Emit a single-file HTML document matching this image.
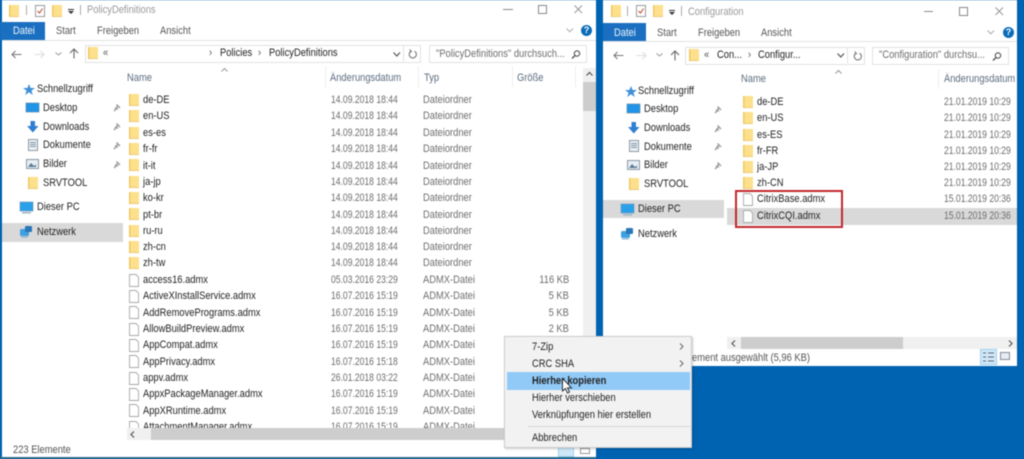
<!DOCTYPE html>
<html lang="de"><head><meta charset="utf-8"><title>PolicyDefinitions</title>
<style>
html,body{margin:0;padding:0;width:1024px;height:459px;overflow:hidden;background:#0063b1}
#r{position:relative;width:1024px;height:459px;overflow:hidden;filter:blur(.4px);font:11px "Liberation Sans",sans-serif;color:#222}
.b{position:absolute}
.t{position:absolute;line-height:14px;white-space:nowrap;transform:scaleX(.85);transform-origin:0 50%}
.g{color:#6d6d6d}
.g[style*="left:204px"],.g[style*="left:944px"]{transform:scaleX(.78)}
.t[style*="right:"]{transform-origin:100% 50%}
.h{color:#5b6b7d}
svg.i{position:absolute;overflow:visible}
.m{color:#555}
</style></head><body><div id="r">
<svg width="0" height="0" style="position:absolute"><defs>
<g id="fo"><rect x="0" y="0" width="10" height="12" fill="#fde08c"/><rect x="0" y="0" width="1.5" height="12" fill="#f1c863"/><rect x="0" y="11.3" width="10" height=".7" fill="#e8c068"/></g>
<g id="fi"><path d="M.5.5H7L9.5 3V12.5H.5Z" fill="#fff" stroke="#a8a8a8" stroke-width=".9"/></g>
<g id="pin"><path d="M3 6L6.5 2.5M4.5 1.5L8 5M4 4.5L5.8 6.5M2 8L4 6" stroke="#9a9a9a" stroke-width="1.4" fill="none"/></g>
<g id="star"><path d="M6 0L7.6 4H12L8.5 6.6L9.8 11L6 8.3L2.2 11L3.5 6.6L0 4H4.4Z" fill="#3f8fd8"/></g>
<g id="desk"><rect x="0" y="0" width="13" height="9" fill="#1f94e8" stroke="#6b8aa6" stroke-width=".7"/></g>
<g id="dl"><path d="M3.5 0H8V5H11.5L5.8 11.5L0 5H3.5Z" fill="#2f7fd0"/></g>
<g id="doc"><rect x=".5" y=".5" width="9" height="11" fill="#eef1f3" stroke="#8b9aa6"/><path d="M2 3.5H8M2 5.5H8M2 7.5H8" stroke="#7d95a8"/></g>
<g id="pic"><rect x=".5" y=".5" width="12" height="9" fill="#e6edf3" stroke="#8b9aa6"/><path d="M2 8L5 4L8 7L10 5.5V8Z" fill="#5b7a95"/></g>
<g id="pc"><rect x="0" y="0" width="13" height="9" fill="#28a0ea" stroke="#7a99b5" stroke-width=".7"/><rect x="2" y="10" width="9" height="1.5" fill="#9db4c6"/></g>
<g id="net"><rect x="0" y="3" width="9" height="7" rx="1.5" fill="#3f9fe0"/><rect x="5" y="0" width="7" height="6" rx="1" fill="#2877b8"/><path d="M1 11H8" stroke="#7fa9c8"/></g>
<g id="chk"><rect x=".5" y=".5" width="9" height="11" fill="#fff" stroke="#9a9a9a"/><path d="M2.5 6L4.5 8L7.5 3.5" stroke="#c0503c" fill="none" stroke-width="1.1"/></g>
<g id="mag"><circle cx="6" cy="3.5" r="2.7" fill="none" stroke="#555" stroke-width="1.1"/><path d="M4 5.5L1 8.5" stroke="#555" stroke-width="1.4"/></g>
<g id="rf"><path d="M6.5 2.2A3.6 3.6 0 1 1 2.5 2.6" fill="none" stroke="#777" stroke-width="1.1"/><path d="M1.5 0.5L3.5 2.5L1.2 3.8" fill="none" stroke="#777"/></g>
</defs></svg>

<!-- LEFT WINDOW -->
<div class="b" style="left:2px;top:0;width:594px;height:457px;background:#fff"></div>
<div class="b" style="left:0;top:457px;width:596px;height:2px;background:#2f6f8f"></div>
<svg class="i" style="left:9px;top:5px" width="10" height="12"><use href="#fo"/></svg>
<div class="b" style="left:26px;top:5px;width:1px;height:10px;background:#aaa"></div>
<svg class="i" style="left:35px;top:5px" width="10" height="12"><use href="#chk"/></svg>
<svg class="i" style="left:52px;top:5px" width="10" height="12"><use href="#fo"/></svg>
<div class="b" style="left:68px;top:9px;width:6px;height:1px;background:#333"></div>
<div class="b" style="left:68px;top:11px;width:0;height:0;border:3px solid transparent;border-top:3px solid #333"></div>
<div class="b" style="left:80px;top:5px;width:1px;height:10px;background:#aaa"></div>
<div class="t" style="left:87px;top:3px;color:#999">PolicyDefinitions</div>
<div class="b" style="left:503px;top:9px;width:10px;height:1px;background:#888"></div>
<div class="b" style="left:538px;top:5px;width:7px;height:7px;border:1px solid #888"></div>
<svg class="i" style="left:574px;top:5px" width="9" height="9"><path d="M.5.5L8 8M8 .5L.5 8" stroke="#999" fill="none"/></svg>
<svg class="i" style="left:566px;top:28px" width="8" height="5"><path d="M.5.5L3.8 3.8L7 .5" stroke="#aaa" fill="none"/></svg>
<div class="b" style="left:581px;top:25px;width:11px;height:11px;border-radius:50%;background:#0a6cb8;color:#fff;font:bold 9px/11px 'Liberation Sans',sans-serif;text-align:center">?</div>
<div class="b" style="left:0;top:22px;width:45px;height:18px;background:#1a6fc0"></div>
<div class="t" style="left:13px;top:24px;color:#f2f6fa">Datei</div>
<div class="t m" style="left:56px;top:24px">Start</div>
<div class="t m" style="left:97px;top:24px">Freigeben</div>
<div class="t m" style="left:160px;top:24px">Ansicht</div>
<div class="b" style="left:2px;top:40px;width:594px;height:1px;background:#e2e2e2"></div>
<svg class="i" style="left:11px;top:50px" width="11" height="9"><path d="M10.5 4.5H1M4.5 1L1 4.5L4.5 8" stroke="#777" fill="none" stroke-width="1.1"/></svg>
<svg class="i" style="left:34px;top:50px" width="11" height="9"><path d="M.5 4.5H10M6.5 1L10 4.5L6.5 8" stroke="#ddd" fill="none" stroke-width="1.1"/></svg>
<svg class="i" style="left:55px;top:52px" width="7" height="4"><path d="M.5.5L3.5 3L6.5.5" stroke="#999" fill="none"/></svg>
<svg class="i" style="left:69px;top:48px" width="10" height="11"><path d="M5 10.5V1M1 5L5 1L9 5" stroke="#666" fill="none" stroke-width="1.1"/></svg>
<div class="b" style="left:85px;top:45px;width:334px;height:16px;border:1px solid #e2e2e2"></div>
<svg class="i" style="left:88px;top:47px" width="10" height="12"><use href="#fo"/></svg>
<div class="t m" style="left:103px;top:46px">«</div>
<div class="t m" style="left:209px;top:46px">›</div>
<div class="t" style="left:220px;top:46px">Policies</div>
<div class="t m" style="left:258px;top:46px">›</div>
<div class="t" style="left:269px;top:46px">PolicyDefinitions</div>
<svg class="i" style="left:393px;top:52px" width="8" height="5"><path d="M.5.5L3.8 4L7 .5" stroke="#555" fill="none" stroke-width="1.2"/></svg>
<div class="b" style="left:403px;top:46px;width:1px;height:16px;background:#e2e2e2"></div>
<svg class="i" style="left:408px;top:49px" width="8" height="9"><use href="#rf"/></svg>
<div class="b" style="left:429px;top:45px;width:156px;height:16px;border:1px solid #e2e2e2"></div>
<div class="t g" style="left:436px;top:47px">"PolicyDefinitions" durchsuch...</div>
<svg class="i" style="left:571px;top:50px" width="9" height="9"><use href="#mag"/></svg>

<svg class="i" style="left:221px;top:68px" width="7" height="4"><path d="M.5 3.5L3.5.5L6.5 3.5" stroke="#999" fill="none"/></svg>
<div class="t h" style="left:127px;top:71px">Name</div>
<div class="t h" style="left:330px;top:71px">Änderungsdatum</div>
<div class="t h" style="left:424px;top:71px">Typ</div>
<div class="t h" style="left:517px;top:71px">Größe</div>
<div class="b" style="left:325px;top:66px;width:1px;height:21px;background:#eee"></div>
<div class="b" style="left:418px;top:66px;width:1px;height:21px;background:#eee"></div>
<div class="b" style="left:512px;top:66px;width:1px;height:21px;background:#eee"></div>
<div class="b" style="left:575px;top:66px;width:1px;height:21px;background:#eee"></div>

<svg class="i" style="left:23px;top:84px" width="12" height="11"><use href="#star"/></svg>
<div class="t" style="left:37px;top:82px">Schnellzugriff</div>
<svg class="i" style="left:26px;top:103px" width="13" height="10"><use href="#desk"/></svg>
<div class="t" style="left:43px;top:101px">Desktop</div>
<svg class="i" style="left:112px;top:103px" width="9" height="9"><use href="#pin"/></svg>
<svg class="i" style="left:27px;top:121px" width="12" height="12"><use href="#dl"/></svg>
<div class="t" style="left:43px;top:120px">Downloads</div>
<svg class="i" style="left:112px;top:122px" width="9" height="9"><use href="#pin"/></svg>
<svg class="i" style="left:28px;top:139px" width="10" height="12"><use href="#doc"/></svg>
<div class="t" style="left:43px;top:138px">Dokumente</div>
<svg class="i" style="left:112px;top:141px" width="9" height="9"><use href="#pin"/></svg>
<svg class="i" style="left:26px;top:159px" width="13" height="10"><use href="#pic"/></svg>
<div class="t" style="left:43px;top:157px">Bilder</div>
<svg class="i" style="left:112px;top:160px" width="9" height="9"><use href="#pin"/></svg>
<svg class="i" style="left:28px;top:177px" width="10" height="12"><use href="#fo"/></svg>
<div class="t" style="left:43px;top:176px">SRVTOOL</div>
<svg class="i" style="left:20px;top:202px" width="13" height="12"><use href="#pc"/></svg>
<div class="t" style="left:37px;top:200px">Dieser PC</div>
<div class="b" style="left:2px;top:223px;width:121px;height:19px;background:#d9d9d9"></div>
<svg class="i" style="left:20px;top:226px" width="13" height="12"><use href="#net"/></svg>
<div class="t" style="left:37px;top:225px">Netzwerk</div>

<!-- left list -->
<div class="b" id="ll" style="left:127px;top:88px;width:456px;height:340px;overflow:hidden">
<svg class="i" style="left:2px;top:6px" width="10" height="12"><use href="#fo"/></svg><div class="t" style="left:16px;top:5px">de-DE</div><div class="t g" style="left:204px;top:5px">14.09.2018 18:44</div><div class="t g" style="left:296px;top:5px">Dateiordner</div>
<svg class="i" style="left:2px;top:22px" width="10" height="12"><use href="#fo"/></svg><div class="t" style="left:16px;top:21px">en-US</div><div class="t g" style="left:204px;top:21px">14.09.2018 18:44</div><div class="t g" style="left:296px;top:21px">Dateiordner</div>
<svg class="i" style="left:2px;top:39px" width="10" height="12"><use href="#fo"/></svg><div class="t" style="left:16px;top:38px">es-es</div><div class="t g" style="left:204px;top:38px">14.09.2018 18:44</div><div class="t g" style="left:296px;top:38px">Dateiordner</div>
<svg class="i" style="left:2px;top:55px" width="10" height="12"><use href="#fo"/></svg><div class="t" style="left:16px;top:54px">fr-fr</div><div class="t g" style="left:204px;top:54px">14.09.2018 18:44</div><div class="t g" style="left:296px;top:54px">Dateiordner</div>
<svg class="i" style="left:2px;top:71px" width="10" height="12"><use href="#fo"/></svg><div class="t" style="left:16px;top:71px">it-it</div><div class="t g" style="left:204px;top:71px">14.09.2018 18:44</div><div class="t g" style="left:296px;top:71px">Dateiordner</div>
<svg class="i" style="left:2px;top:88px" width="10" height="12"><use href="#fo"/></svg><div class="t" style="left:16px;top:87px">ja-jp</div><div class="t g" style="left:204px;top:87px">14.09.2018 18:44</div><div class="t g" style="left:296px;top:87px">Dateiordner</div>
<svg class="i" style="left:2px;top:104px" width="10" height="12"><use href="#fo"/></svg><div class="t" style="left:16px;top:103px">ko-kr</div><div class="t g" style="left:204px;top:103px">14.09.2018 18:44</div><div class="t g" style="left:296px;top:103px">Dateiordner</div>
<svg class="i" style="left:2px;top:120px" width="10" height="12"><use href="#fo"/></svg><div class="t" style="left:16px;top:120px">pt-br</div><div class="t g" style="left:204px;top:120px">14.09.2018 18:44</div><div class="t g" style="left:296px;top:120px">Dateiordner</div>
<svg class="i" style="left:2px;top:137px" width="10" height="12"><use href="#fo"/></svg><div class="t" style="left:16px;top:136px">ru-ru</div><div class="t g" style="left:204px;top:136px">14.09.2018 18:44</div><div class="t g" style="left:296px;top:136px">Dateiordner</div>
<svg class="i" style="left:2px;top:153px" width="10" height="12"><use href="#fo"/></svg><div class="t" style="left:16px;top:152px">zh-cn</div><div class="t g" style="left:204px;top:152px">14.09.2018 18:44</div><div class="t g" style="left:296px;top:152px">Dateiordner</div>
<svg class="i" style="left:2px;top:169px" width="10" height="12"><use href="#fo"/></svg><div class="t" style="left:16px;top:168px">zh-tw</div><div class="t g" style="left:204px;top:168px">14.09.2018 18:44</div><div class="t g" style="left:296px;top:168px">Dateiordner</div>
<svg class="i" style="left:2px;top:186px" width="10" height="13"><use href="#fi"/></svg><div class="t" style="left:16px;top:185px">access16.admx</div><div class="t g" style="left:204px;top:185px">05.03.2016 23:29</div><div class="t g" style="left:296px;top:185px">ADMX-Datei</div><div class="t g" style="right:14px;top:185px">116 KB</div>
<svg class="i" style="left:2px;top:202px" width="10" height="13"><use href="#fi"/></svg><div class="t" style="left:16px;top:201px">ActiveXInstallService.admx</div><div class="t g" style="left:204px;top:201px">16.07.2016 15:19</div><div class="t g" style="left:296px;top:201px">ADMX-Datei</div><div class="t g" style="right:14px;top:201px">5 KB</div>
<svg class="i" style="left:2px;top:218px" width="10" height="13"><use href="#fi"/></svg><div class="t" style="left:16px;top:218px">AddRemovePrograms.admx</div><div class="t g" style="left:204px;top:218px">16.07.2016 15:19</div><div class="t g" style="left:296px;top:218px">ADMX-Datei</div><div class="t g" style="right:14px;top:218px">5 KB</div>
<svg class="i" style="left:2px;top:235px" width="10" height="13"><use href="#fi"/></svg><div class="t" style="left:16px;top:234px">AllowBuildPreview.admx</div><div class="t g" style="left:204px;top:234px">16.07.2016 15:19</div><div class="t g" style="left:296px;top:234px">ADMX-Datei</div><div class="t g" style="right:14px;top:234px">2 KB</div>
<svg class="i" style="left:2px;top:251px" width="10" height="13"><use href="#fi"/></svg><div class="t" style="left:16px;top:250px">AppCompat.admx</div><div class="t g" style="left:204px;top:250px">16.07.2016 15:19</div><div class="t g" style="left:296px;top:250px">ADMX-Datei</div>
<svg class="i" style="left:2px;top:267px" width="10" height="13"><use href="#fi"/></svg><div class="t" style="left:16px;top:267px">AppPrivacy.admx</div><div class="t g" style="left:204px;top:267px">16.07.2016 15:18</div><div class="t g" style="left:296px;top:267px">ADMX-Datei</div>
<svg class="i" style="left:2px;top:284px" width="10" height="13"><use href="#fi"/></svg><div class="t" style="left:16px;top:283px">appv.admx</div><div class="t g" style="left:204px;top:283px">26.01.2018 03:22</div><div class="t g" style="left:296px;top:283px">ADMX-Datei</div>
<svg class="i" style="left:2px;top:300px" width="10" height="13"><use href="#fi"/></svg><div class="t" style="left:16px;top:299px">AppxPackageManager.admx</div><div class="t g" style="left:204px;top:299px">16.07.2016 15:19</div><div class="t g" style="left:296px;top:299px">ADMX-Datei</div>
<svg class="i" style="left:2px;top:316px" width="10" height="13"><use href="#fi"/></svg><div class="t" style="left:16px;top:316px">AppXRuntime.admx</div><div class="t g" style="left:204px;top:316px">16.07.2016 15:19</div><div class="t g" style="left:296px;top:316px">ADMX-Datei</div>
<svg class="i" style="left:2px;top:333px" width="10" height="13"><use href="#fi"/></svg><div class="t" style="left:16px;top:332px">AttachmentManager.admx</div><div class="t g" style="left:204px;top:332px">16.07.2016 15:19</div><div class="t g" style="left:296px;top:332px">ADMX-Datei</div>
</div>
<!-- left scrollbars -->
<div class="b" style="left:583px;top:68px;width:13px;height:372px;background:#f0f0f0"></div>
<div class="b" style="left:583px;top:82px;width:13px;height:29px;background:#cdcdcd"></div>
<svg class="i" style="left:586px;top:72px" width="7" height="4"><path d="M.5 3.5L3.5.5L6.5 3.5" stroke="#555" fill="none" stroke-width="1.2"/></svg>
<div class="b" style="left:127px;top:428px;width:456px;height:12px;background:#f0f0f0"></div>
<div class="b" style="left:151px;top:428px;width:354px;height:12px;background:#cdcdcd"></div>
<svg class="i" style="left:130px;top:431px" width="5" height="7"><path d="M4 .5L1 3.5L4 6.5" stroke="#555" fill="none" stroke-width="1.2"/></svg>
<div class="t m" style="left:13px;top:443px">223 Elemente</div>
<div class="b" style="left:558px;top:447px;width:16px;height:10px;background:#cfe8f8;border:1px solid #9fd3f2;box-sizing:border-box"></div>
<div class="b" style="left:580px;top:448px;width:10px;height:6px;border:1px solid #999;box-sizing:border-box"></div>

<!-- RIGHT WINDOW -->
<div class="b" style="left:603px;top:0;width:414px;height:366px;background:#fff"></div>
<svg class="i" style="left:611px;top:5px" width="10" height="12"><use href="#fo"/></svg>
<div class="b" style="left:627px;top:6px;width:1px;height:10px;background:#aaa"></div>
<svg class="i" style="left:636px;top:5px" width="10" height="12"><use href="#chk"/></svg>
<svg class="i" style="left:653px;top:5px" width="10" height="12"><use href="#fo"/></svg>
<div class="b" style="left:669px;top:10px;width:6px;height:1px;background:#333"></div>
<div class="b" style="left:669px;top:12px;width:0;height:0;border:3px solid transparent;border-top:3px solid #333"></div>
<div class="b" style="left:681px;top:6px;width:1px;height:10px;background:#aaa"></div>
<div class="t" style="left:688px;top:5px;color:#999">Configuration</div>
<div class="b" style="left:924px;top:11px;width:9px;height:1px;background:#888"></div>
<div class="b" style="left:959px;top:7px;width:7px;height:7px;border:1px solid #888"></div>
<svg class="i" style="left:995px;top:7px" width="9" height="9"><path d="M.5.5L8 8M8 .5L.5 8" stroke="#999" fill="none"/></svg>
<svg class="i" style="left:987px;top:30px" width="8" height="5"><path d="M.5.5L3.8 3.8L7 .5" stroke="#aaa" fill="none"/></svg>
<div class="b" style="left:1003px;top:27px;width:11px;height:11px;border-radius:50%;background:#0a6cb8;color:#fff;font:bold 9px/11px 'Liberation Sans',sans-serif;text-align:center">?</div>
<div class="b" style="left:603px;top:23px;width:43px;height:18px;background:#1a6fc0"></div>
<div class="t" style="left:614px;top:26px;color:#f2f6fa">Datei</div>
<div class="t m" style="left:657px;top:26px">Start</div>
<div class="t m" style="left:698px;top:26px">Freigeben</div>
<div class="t m" style="left:761px;top:26px">Ansicht</div>
<div class="b" style="left:603px;top:41px;width:414px;height:1px;background:#e2e2e2"></div>
<svg class="i" style="left:613px;top:51px" width="11" height="9"><path d="M10.5 4.5H1M4.5 1L1 4.5L4.5 8" stroke="#777" fill="none" stroke-width="1.1"/></svg>
<svg class="i" style="left:636px;top:51px" width="11" height="9"><path d="M.5 4.5H10M6.5 1L10 4.5L6.5 8" stroke="#ddd" fill="none" stroke-width="1.1"/></svg>
<svg class="i" style="left:656px;top:53px" width="7" height="4"><path d="M.5.5L3.5 3L6.5.5" stroke="#999" fill="none"/></svg>
<svg class="i" style="left:670px;top:50px" width="10" height="11"><path d="M5 10.5V1M1 5L5 1L9 5" stroke="#666" fill="none" stroke-width="1.1"/></svg>
<div class="b" style="left:685px;top:47px;width:178px;height:16px;border:1px solid #e2e2e2"></div>
<svg class="i" style="left:689px;top:49px" width="10" height="12"><use href="#fo"/></svg>
<div class="t m" style="left:704px;top:48px">«</div>
<div class="t" style="left:717px;top:48px">Con...</div>
<div class="t m" style="left:748px;top:48px">›</div>
<div class="t" style="left:758px;top:48px">Configur...</div>
<svg class="i" style="left:837px;top:53px" width="8" height="5"><path d="M.5.5L3.8 4L7 .5" stroke="#555" fill="none" stroke-width="1.2"/></svg>
<div class="b" style="left:847px;top:48px;width:1px;height:15px;background:#e2e2e2"></div>
<svg class="i" style="left:853px;top:51px" width="8" height="9"><use href="#rf"/></svg>
<div class="b" style="left:872px;top:47px;width:135px;height:16px;border:1px solid #e2e2e2"></div>
<div class="t g" style="left:879px;top:48px">"Configuration" durchsu...</div>
<svg class="i" style="left:992px;top:52px" width="9" height="9"><use href="#mag"/></svg>

<svg class="i" style="left:835px;top:70px" width="7" height="4"><path d="M.5 3.5L3.5.5L6.5 3.5" stroke="#999" fill="none"/></svg>
<div class="t h" style="left:741px;top:72px">Name</div>
<div class="t h" style="left:944px;top:72px">Änderungsdatum</div>
<div class="b" style="left:938px;top:69px;width:1px;height:20px;background:#eee"></div>

<svg class="i" style="left:625px;top:86px" width="12" height="11"><use href="#star"/></svg>
<div class="t" style="left:638px;top:84px">Schnellzugriff</div>
<svg class="i" style="left:627px;top:104px" width="13" height="10"><use href="#desk"/></svg>
<div class="t" style="left:644px;top:102px">Desktop</div>
<svg class="i" style="left:713px;top:105px" width="9" height="9"><use href="#pin"/></svg>
<svg class="i" style="left:628px;top:122px" width="12" height="12"><use href="#dl"/></svg>
<div class="t" style="left:644px;top:121px">Downloads</div>
<svg class="i" style="left:713px;top:124px" width="9" height="9"><use href="#pin"/></svg>
<svg class="i" style="left:629px;top:140px" width="10" height="12"><use href="#doc"/></svg>
<div class="t" style="left:644px;top:140px">Dokumente</div>
<svg class="i" style="left:713px;top:142px" width="9" height="9"><use href="#pin"/></svg>
<svg class="i" style="left:627px;top:160px" width="13" height="10"><use href="#pic"/></svg>
<div class="t" style="left:644px;top:158px">Bilder</div>
<svg class="i" style="left:713px;top:161px" width="9" height="9"><use href="#pin"/></svg>
<svg class="i" style="left:629px;top:178px" width="10" height="12"><use href="#fo"/></svg>
<div class="t" style="left:644px;top:177px">SRVTOOL</div>
<div class="b" style="left:603px;top:200px;width:121px;height:18px;background:#d9d9d9"></div>
<svg class="i" style="left:621px;top:204px" width="13" height="12"><use href="#pc"/></svg>
<div class="t" style="left:638px;top:202px">Dieser PC</div>
<svg class="i" style="left:621px;top:228px" width="13" height="12"><use href="#net"/></svg>
<div class="t" style="left:638px;top:227px">Netzwerk</div>

<svg class="i" style="left:743px;top:96px" width="10" height="12"><use href="#fo"/></svg><div class="t" style="left:757px;top:95px">de-DE</div><div class="t g" style="left:944px;top:95px">21.01.2019 10:29</div>
<svg class="i" style="left:743px;top:112px" width="10" height="12"><use href="#fo"/></svg><div class="t" style="left:757px;top:111px">en-US</div><div class="t g" style="left:944px;top:111px">21.01.2019 10:29</div>
<svg class="i" style="left:743px;top:129px" width="10" height="12"><use href="#fo"/></svg><div class="t" style="left:757px;top:128px">es-ES</div><div class="t g" style="left:944px;top:128px">21.01.2019 10:29</div>
<svg class="i" style="left:743px;top:145px" width="10" height="12"><use href="#fo"/></svg><div class="t" style="left:757px;top:144px">fr-FR</div><div class="t g" style="left:944px;top:144px">21.01.2019 10:29</div>
<svg class="i" style="left:743px;top:161px" width="10" height="12"><use href="#fo"/></svg><div class="t" style="left:757px;top:160px">ja-JP</div><div class="t g" style="left:944px;top:160px">21.01.2019 10:29</div>
<svg class="i" style="left:743px;top:177px" width="10" height="12"><use href="#fo"/></svg><div class="t" style="left:757px;top:176px">zh-CN</div><div class="t g" style="left:944px;top:176px">21.01.2019 10:29</div>
<div class="b" style="left:727px;top:208px;width:290px;height:17px;background:#d9d9d9"></div>
<svg class="i" style="left:743px;top:193px" width="10" height="13"><use href="#fi"/></svg><div class="t" style="left:757px;top:192px">CitrixBase.admx</div><div class="t g" style="left:944px;top:192px">15.01.2019 20:36</div>
<svg class="i" style="left:743px;top:210px" width="10" height="13"><use href="#fi"/></svg><div class="t" style="left:757px;top:209px">CitrixCQI.admx</div><div class="t g" style="left:944px;top:209px">15.01.2019 20:36</div>
<div class="b" style="left:735px;top:190px;width:108px;height:38px;border:2px solid #c1272d;box-sizing:border-box"></div>

<div class="b" style="left:727px;top:337px;width:290px;height:12px;background:#f0f0f0"></div>
<div class="b" style="left:741px;top:337px;width:162px;height:12px;background:#cdcdcd"></div>
<svg class="i" style="left:731px;top:340px" width="5" height="7"><path d="M4 .5L1 3.5L4 6.5" stroke="#555" fill="none" stroke-width="1.2"/></svg>
<svg class="i" style="left:1008px;top:340px" width="5" height="7"><path d="M1 .5L4 3.5L1 6.5" stroke="#555" fill="none" stroke-width="1.2"/></svg>
<div class="t m" style="left:692px;top:351px">ement ausgewählt (5,96 KB)</div>
<div class="b" style="left:980px;top:349px;width:17px;height:16px;background:#cfe8f8;border:1px solid #9fd3f2;box-sizing:border-box"></div>
<svg class="i" style="left:983px;top:352px" width="11" height="10"><path d="M0 1H3M5 1H11M0 5H3M5 5H11M0 9H3M5 9H11" stroke="#667" stroke-width="1"/></svg>
<div class="b" style="left:1000px;top:352px;width:10px;height:8px;border:1px solid #889;box-sizing:border-box;background:#e6edf3"></div>

<!-- CONTEXT MENU -->
<div class="b" style="left:504px;top:336px;width:188px;height:112px;background:#f2f2f2;border:1px solid #ccc;box-sizing:border-box;box-shadow:1px 1px 2px rgba(0,0,0,.2)"></div>
<div class="b" style="left:507px;top:372px;width:183px;height:18px;background:#91c9f7"></div>
<div class="t" style="left:532px;top:340px">7-Zip</div>
<svg class="i" style="left:679px;top:343px" width="5" height="7"><path d="M1 .5L4 3.5L1 6.5" stroke="#666" fill="none"/></svg>
<div class="t" style="left:532px;top:357px">CRC SHA</div>
<svg class="i" style="left:679px;top:360px" width="5" height="7"><path d="M1 .5L4 3.5L1 6.5" stroke="#666" fill="none"/></svg>
<div class="t" style="left:532px;top:374px;font-weight:bold">Hierher kopieren</div>
<div class="t" style="left:532px;top:391px">Hierher verschieben</div>
<div class="t" style="left:532px;top:408px">Verknüpfungen hier erstellen</div>
<div class="b" style="left:528px;top:426px;width:162px;height:1px;background:#d5d5d5"></div>
<div class="t" style="left:532px;top:431px">Abbrechen</div>
<svg class="i" style="left:562px;top:378px" width="10" height="16"><path d="M.5.5V13L3.5 10.5L5.5 15L7.5 14L5.5 9.8H9.5Z" fill="#fff" stroke="#222" stroke-width=".9"/></svg>
</div></body></html>
